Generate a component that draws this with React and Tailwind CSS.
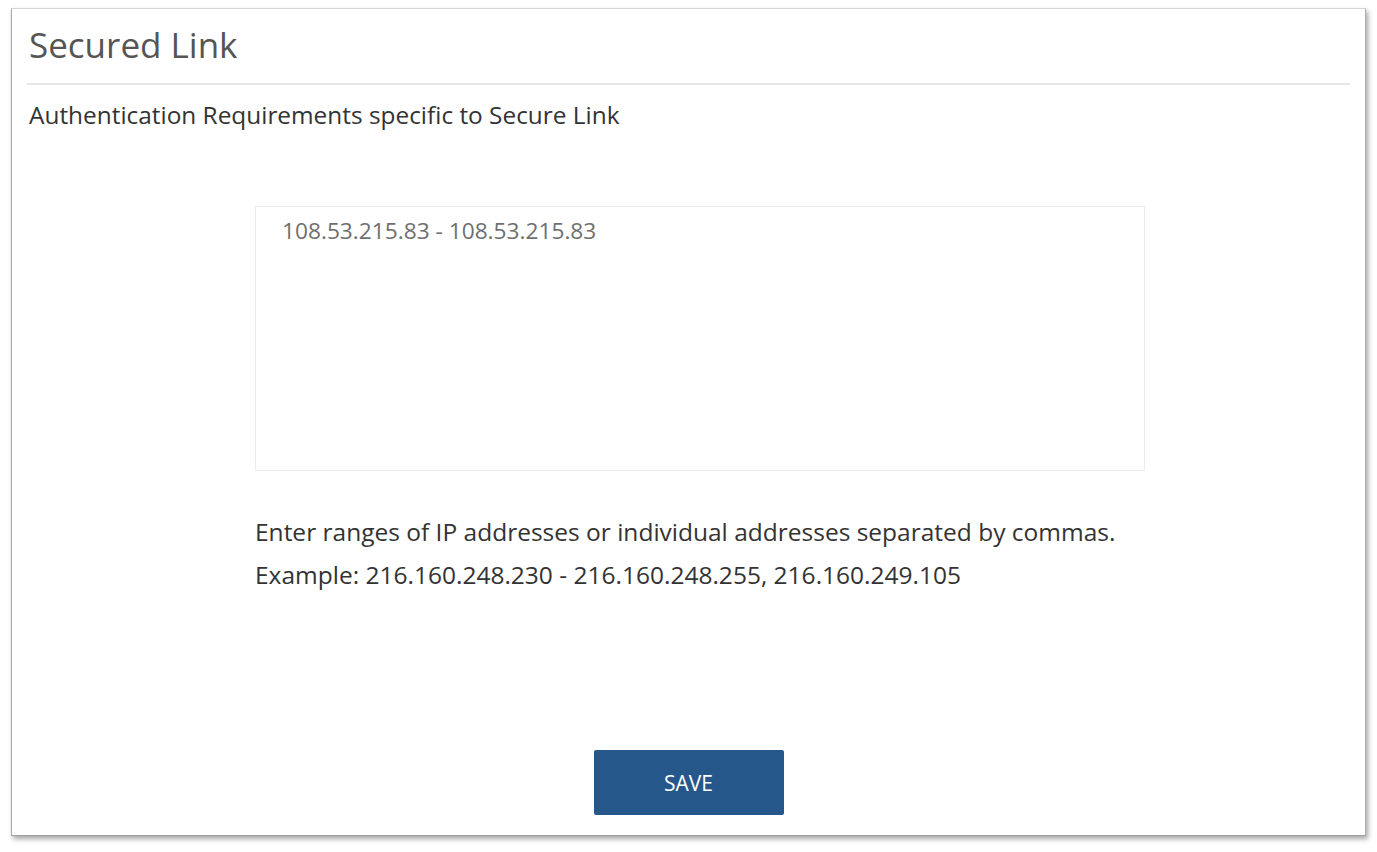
export default function App() {
  return (
    <div className="min-h-screen bg-white pt-[8px] pl-[11px]" style={{ fontFamily: '"Open Sans", "Liberation Sans", sans-serif' }}>
      <div className="w-[1355px] bg-white border border-[#d4d4d4] border-l-[#a8a8a8] border-b-[#a0a0a0] border-r-[#b0b0b0] shadow-[2px_3px_5px_rgba(0,0,0,0.35)] pt-[14px] pb-[20px]">
        <div className="px-[15px]">
          <h1 className="text-[35px] leading-[44px] text-[#555555] pl-[2px]">Secured Link</h1>
          <div className="mt-[16px] h-[2px] bg-[#e6e6e6]" />
          <p className="mt-[13px] text-[24.4px] leading-[33px] text-[#333333] pl-[2px]">
            Authentication Requirements specific to Secure Link
          </p>
        </div>

        <div className="ml-[243px] w-[890px]">
          <div className="mt-[75px] h-[265px] border border-[#ececec] pt-[8px] pl-[26px] text-[22.7px] leading-[32px] text-[#6f6f6f]">
            108.53.215.83 - 108.53.215.83
          </div>
          <div className="mt-[39px] text-[24.5px] leading-[43px] text-[#333333]">
            <p>Enter ranges of IP addresses or individual addresses separated by commas.</p>
            <p>Example: 216.160.248.230 - 216.160.248.255, 216.160.249.105</p>
          </div>
        </div>

        <div className="mt-[154px] flex justify-center">
          <button className="w-[190px] h-[65px] bg-[#26578a] rounded-[2px] text-white text-[21px] pt-[3px]">
            SAVE
          </button>
        </div>
      </div>
    </div>
  )
}
